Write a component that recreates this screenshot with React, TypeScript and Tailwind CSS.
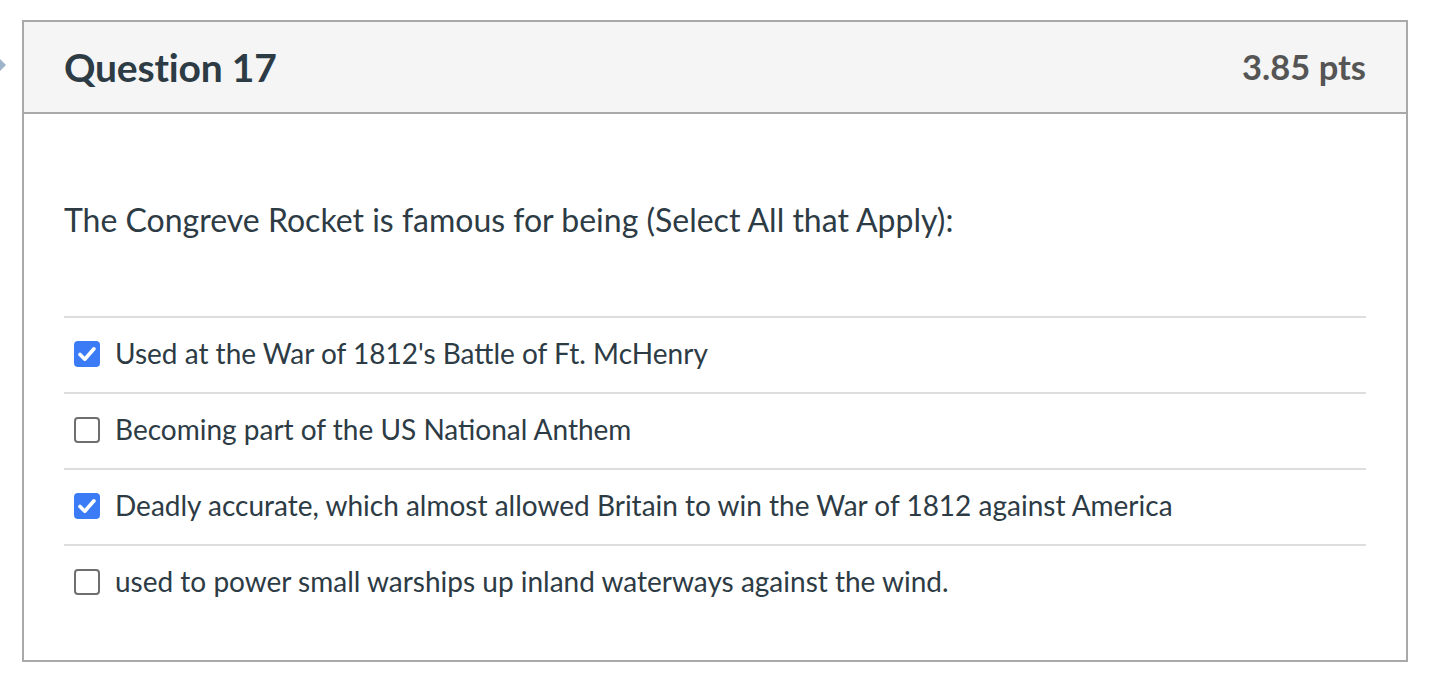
import React from 'react';

const answers = [
  { text: "Used at the War of 1812's Battle of Ft. McHenry", checked: true },
  { text: 'Becoming part of the US National Anthem', checked: false },
  { text: 'Deadly accurate, which almost allowed Britain to win the War of 1812 against America', checked: true },
  { text: 'used to power small warships up inland waterways against the wind.', checked: false },
];

function Checkbox({ checked }: { checked: boolean }) {
  if (checked) {
    return (
      <span className="flex h-[26px] w-[26px] shrink-0 items-center justify-center rounded-[4px] bg-[#3b7cf6]">
        <svg width="26" height="26" viewBox="0 0 26 26" fill="none">
          <path d="M6 13.5 L10.8 18.2 L20 7.8" stroke="white" strokeWidth="3.6" strokeLinecap="round" strokeLinejoin="round" />
        </svg>
      </span>
    );
  }
  return <span className="h-[26px] w-[26px] shrink-0 rounded-[4px] border-2 border-[#6f6f6f] bg-white" />;
}

export default function App() {
  return (
    <div className="relative min-h-[686px] bg-white pl-[22px] pr-[44px] pt-[20px] font-['Lato','Noto_Sans',sans-serif] text-[#2d3b45]">
      {/* flag marker, partly off the page */}
      <svg className="absolute left-[-10px] top-[55px]" width="18" height="20" viewBox="0 0 18 20">
        <path d="M2 10 L9 3 L16 10 L9 17 Z" fill="#9db3c9" />
      </svg>

      <div className="border-2 border-[#a9a9a9]">
        <div className="flex h-[92px] items-center justify-between border-b-2 border-[#a9a9a9] bg-[#f5f5f5] px-10">
          <h2 className="text-[39px] font-bold tracking-[-0.2px]">Question 17</h2>
          <span className="text-[34.5px] font-bold text-[#555]">3.85 pts</span>
        </div>

        <div className="px-10 pb-[40px] pt-[86px]">
          <p className="text-[32px] leading-[40px]">The Congreve Rocket is famous for being (Select All that Apply):</p>
          <div className="mt-[76px]">
            {answers.map((a) => (
              <label key={a.text} className="flex h-[76px] items-center gap-[15px] border-t-2 border-[#dddddd] pb-[2px] pl-[10px] text-[28px]">
                <Checkbox checked={a.checked} />
                <span className="pb-[3px]">{a.text}</span>
              </label>
            ))}
          </div>
        </div>
      </div>
    </div>
  );
}
